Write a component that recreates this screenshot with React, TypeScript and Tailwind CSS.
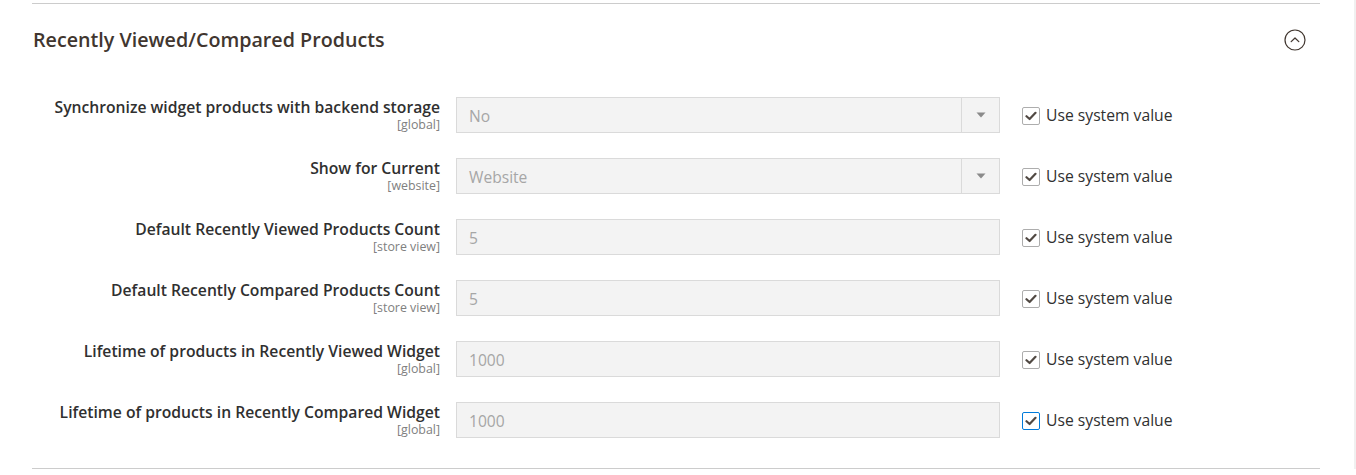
const ROWS = [
  { label: 'Synchronize widget products with backend storage', scope: '[global]', value: 'No', select: true },
  { label: 'Show for Current', scope: '[website]', value: 'Website', select: true },
  { label: 'Default Recently Viewed Products Count', scope: '[store view]', value: '5' },
  { label: 'Default Recently Compared Products Count', scope: '[store view]', value: '5' },
  { label: 'Lifetime of products in Recently Viewed Widget', scope: '[global]', value: '1000' },
  { label: 'Lifetime of products in Recently Compared Widget', scope: '[global]', value: '1000', focused: true },
]

function Check({ focused }: { focused?: boolean }) {
  return (
    <span
      className={`mt-[2px] w-[18px] h-[18px] rounded-[2px] border bg-white flex items-center justify-center ${
        focused ? 'border-[#007bdb]' : 'border-[#adadad]'
      }`}
    >
      <svg width="12" height="10" viewBox="0 0 12 10" fill="none">
        <path d="M1.5 5.2 L4.6 8 L10.5 1.8" stroke="#514943" strokeWidth="2.2" strokeLinecap="round" strokeLinejoin="round" />
      </svg>
    </span>
  )
}

export default function App() {
  return (
    <div className="flex w-[1356px] bg-white text-[#303030]" style={{ fontFamily: '"Open Sans", "Noto Sans", sans-serif' }}>
      <div className="w-[1354px] pt-[3px] pl-[32px]">
        <div className="w-[1288px]">
          <div className="h-px bg-[#cccccc]" />
          <div className="h-[72px] flex items-center justify-between">
            <h2 className="pl-px text-[19.7px] font-semibold text-[#41362f]">Recently Viewed/Compared Products</h2>
            <svg width="22" height="22" viewBox="0 0 22 22" fill="none" className="mr-[14px]">
              <circle cx="11" cy="11" r="10" stroke="#41362f" strokeWidth="1.2" />
              <path d="M7.2 12.6 L11 9 L14.8 12.6" stroke="#41362f" strokeWidth="1.3" strokeLinecap="round" strokeLinejoin="round" />
            </svg>
          </div>
          <div className="pt-[21px] pb-[30px] flex flex-col gap-[25px]">
            {ROWS.map(row => (
              <div key={row.label} className="flex h-[36px]">
                <div className="w-[424px] pr-[16px] text-right flex flex-col items-end">
                  <span className="block text-[15.7px] leading-[21px] font-semibold text-[#303030]">{row.label}</span>
                  <span className="block text-[12.4px] leading-[14px] text-[#808080]">{row.scope}</span>
                </div>
                <div className="w-[544px] h-[36px] flex border border-[#dadada] bg-[#f3f3f3]">
                  <div className="flex-1 flex items-center pl-[12px] pt-[3px] text-[15.6px] text-[#a6a6a6]">{row.value}</div>
                  {row.select && (
                    <div className="w-[38px] border-l border-[#dadada] flex items-center justify-center">
                      <svg width="10" height="6" viewBox="0 0 10 6">
                        <path d="M0.5 0.5 H9.5 L5 5.5 Z" fill="#8a8a8a" />
                      </svg>
                    </div>
                  )}
                </div>
                <label className="ml-[22px] flex items-center gap-[6px] text-[15.7px] text-[#303030]">
                  <Check focused={row.focused} />
                  <span className="pt-[2px]">Use system value</span>
                </label>
              </div>
            ))}
          </div>
          <div className="h-px bg-[#cccccc]" />
        </div>
      </div>
      <div className="w-[2px] bg-[#f0f0f0]" />
    </div>
  )
}
